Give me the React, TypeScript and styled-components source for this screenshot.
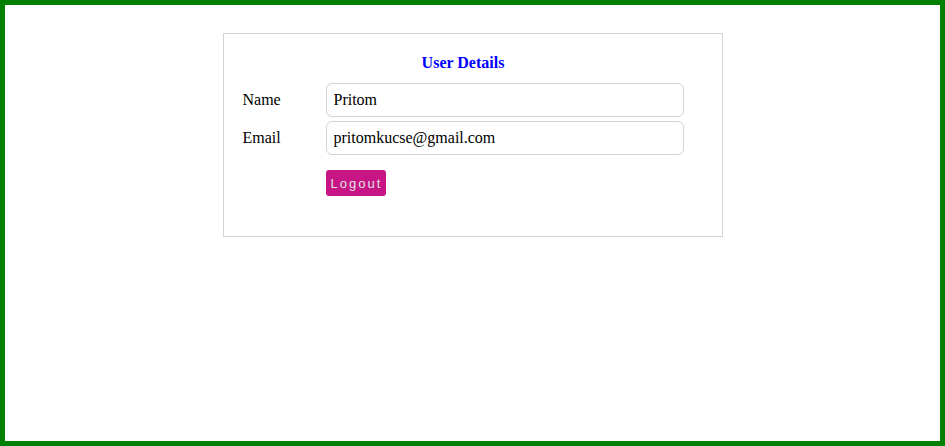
import React from "react";
import styled, { createGlobalStyle } from "styled-components";

const GlobalStyle = createGlobalStyle`
  html, body { margin: 0; padding: 0; background: #fff; }
  body { font-family: "Liberation Serif", "Times New Roman", serif; font-size: 16px; color: #000; }
  * { box-sizing: border-box; }
`;

const Frame = styled.div`
  height: 100vh;
  border: 5px solid #008000;
  padding-top: 28px;
`;

const Card = styled.div`
  width: 500px;
  height: 204px;
  margin: 0 auto;
  border: 1px solid #d3d3d3;
  padding: 20px 0 0 19px;
`;

const Form = styled.div`
  width: 441px;
  display: grid;
  grid-template-columns: 83px 358px;
  row-gap: 4px;
  align-items: center;
`;

const Title = styled.div`
  grid-column: 1 / span 2;
  text-align: center;
  font-weight: bold;
  color: #0000ff;
  font-size: 16px;
  line-height: 18px;
  margin-bottom: 7px;
`;

const Label = styled.label`
  font-size: 16px;
`;

const Input = styled.input`
  width: 358px;
  height: 34px;
  border: 1px solid #d3d3d3;
  border-radius: 6px;
  padding: 0 7px;
  font-family: "Liberation Serif", "Times New Roman", serif;
  font-size: 16px;
  color: #000;
  outline: none;
`;

const ButtonCell = styled.div`
  grid-column: 2;
  padding-top: 11px;
`;

const Button = styled.button`
  display: inline-block;
  height: 26px;
  padding: 0 4px 0 5px;
  border: none;
  border-radius: 3px;
  background: #c71585;
  color: #e2e2e2;
  font-family: "Liberation Sans", Arial, sans-serif;
  font-size: 13px;
  letter-spacing: 2px;
  cursor: pointer;
`;

export default function App() {
  return (
    <>
      <GlobalStyle />
      <Frame>
        <Card>
          <Form>
            <Title>User Details</Title>
            <Label>Name</Label>
            <Input defaultValue="Pritom" />
            <Label>Email</Label>
            <Input defaultValue="pritomkucse@gmail.com" />
            <ButtonCell>
              <Button>Logout</Button>
            </ButtonCell>
          </Form>
        </Card>
      </Frame>
    </>
  );
}
